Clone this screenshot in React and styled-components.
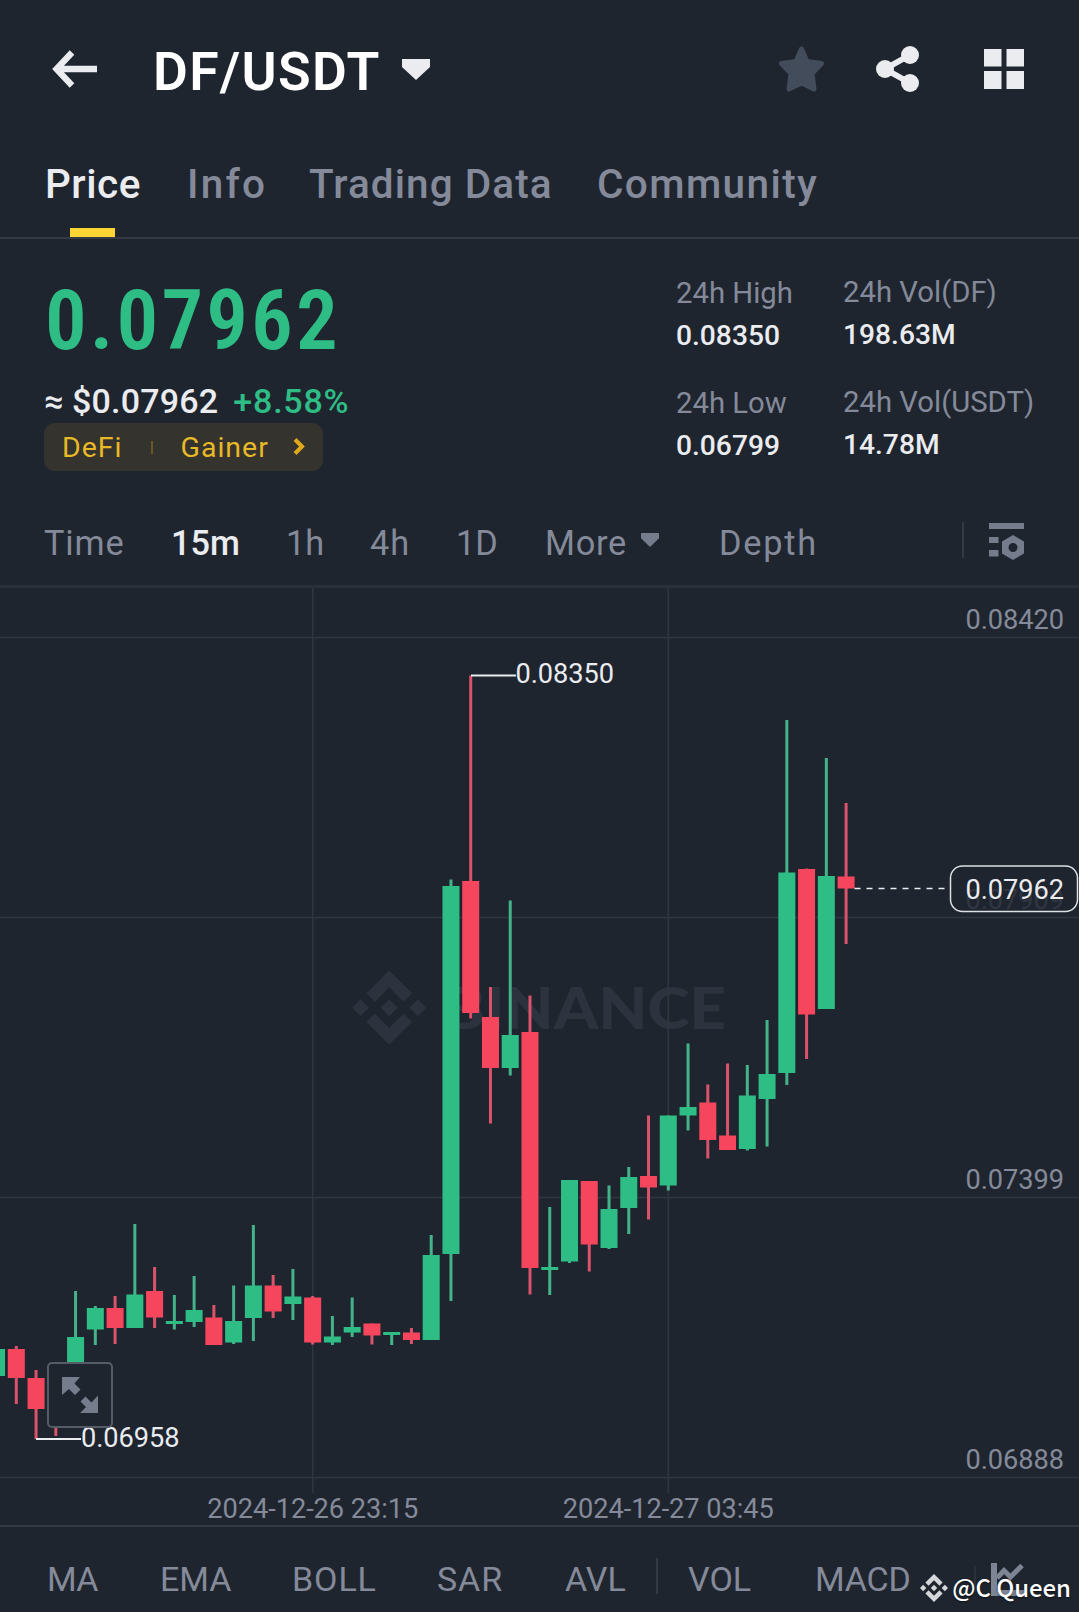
import styled, { createGlobalStyle } from 'styled-components'

const GlobalStyle = createGlobalStyle`
  :root {
    --bg: #1f252f;
    --line: #333a45;
    --grid: #303641;
    --text: #eaecef;
    --muted: #848a99;
    --icon: #757c8c;
    --green: #2ebd85;
    --red: #f6465d;
    --yellow: #fcd535;
  }
  * {
    box-sizing: border-box;
  }
  body {
    margin: 0;
    background: var(--bg);
    color: var(--text);
    font-family: Roboto, 'Noto Sans', sans-serif;
  }
`

const Screen = styled.div`
  position: relative;
  width: 1079px;
  height: 1612px;
  display: flex;
  flex-direction: column;
  overflow: hidden;
  background: var(--bg);
`

const Header = styled.header`
  height: 138px;
  padding: 0 55px 0 52px;
  display: flex;
  align-items: center;
  & > svg {
    display: block;
    flex: none;
  }
`

const Title = styled.h1`
  margin: 0 21px 0 56px;
  padding-top: 5px;
  width: 228px;
  font-size: 53.5px;
  line-height: 64px;
  font-weight: 600;
  letter-spacing: 1.3px;
  color: #fff;
`

const Actions = styled.div`
  margin-left: auto;
  display: flex;
  align-items: center;
  & > svg:nth-child(2) {
    margin: 0 65px 0 52px;
  }
`

const Tabs = styled.nav`
  height: 101px;
  padding: 22px 0 0 45px;
  display: flex;
  gap: 47px;
  border-bottom: 2px solid var(--line);
`

const Tab = styled.div`
  width: ${props => props.$width}px;
  height: 77px;
  display: flex;
  flex-direction: column;
  justify-content: space-between;
  font-size: 40.5px;
  line-height: 49px;
  font-weight: 500;
  letter-spacing: ${props => props.$spacing}px;
  white-space: nowrap;
  color: ${props => props.$active ? 'var(--text)' : 'var(--muted)'};
  &::after {
    content: '';
    width: 45px;
    height: 9px;
    margin-left: 25px;
    background: ${props => props.$active ? 'var(--yellow)' : 'transparent'};
  }
`

const Summary = styled.section`
  height: 262px;
  padding-left: 44px;
  display: flex;
`

const Quote = styled.div`
  width: 632px;
  padding-top: 42px;
`

const LastPrice = styled.div`
  padding-left: 1px;
  font-family: 'Roboto Condensed', Roboto, sans-serif;
  font-size: 83px;
  line-height: 80px;
  font-weight: 600;
  letter-spacing: 3.1px;
  color: var(--green);
`

const Converted = styled.div`
  margin-top: 19px;
  display: flex;
  font-size: 34px;
  line-height: 43px;
  font-weight: 500;
  white-space: pre;
  letter-spacing: .2px;
  & > span:first-child {
    width: 28px;
  }
  & > span:last-child {
    margin-left: 15px;
    letter-spacing: .8px;
    color: var(--green);
  }
`

const Badge = styled.div`
  width: 279px;
  height: 48px;
  padding: 0 18px 0 18px;
  display: flex;
  align-items: center;
  border-radius: 11px;
  background: #35332d;
  color: #e7b927;
  font-size: 28.5px;
  letter-spacing: 1px;
  & > i {
    width: 2px;
    height: 13px;
    margin: 0 28px 0 28px;
    background: #6a5626;
  }
  & > svg {
    margin: 0 0 1px auto;
  }
`

const Stats = styled.dl`
  margin: 0;
  padding-top: ${props => props.$top}px;
  width: ${props => props.$width}px;
  white-space: nowrap;
  line-height: 36px;
`

const StatLabel = styled.dt`
  font-size: 29.3px;
  color: var(--muted);
`

const StatValue = styled.dd`
  margin: 7px 0 31px;
  font-size: 28.2px;
  font-weight: 480;
`

const Intervals = styled.nav`
  height: 87px;
  padding: 0 55px 0 44px;
  display: grid;
  grid-template-columns: 127px 115px 84px 86px 89px 174px 1fr auto auto;
  align-items: center;
  border-bottom: 3px solid #2a303b;
  font-size: 34.3px;
  letter-spacing: .6px;
  color: var(--muted);
`

const Interval = styled.div`
  display: flex;
  align-items: center;
  gap: 14px;
  white-space: nowrap;
  font-weight: ${props => props.$active ? 500 : 400};
  letter-spacing: ${props => props.$spacing || 0}px;
  color: ${props => props.$active ? 'var(--text)' : 'inherit'};
  & > svg {
    margin-top: -6px;
  }
`

const Divider = styled.i`
  width: 2px;
  height: ${props => props.$height || 36}px;
  margin-top: ${props => props.$shift || 0}px;
  background: ${props => props.$faint ? '#2a303a' : 'var(--line)'};
`

const Settings = styled.svg`
  margin: -3px 0 0 25px;
`

const ChartArea = styled.section`
  position: relative;
  height: 939px;
  border-bottom: 2px solid var(--line);
`

const Plot = styled.svg`
  display: block;
  font-family: Roboto, sans-serif;
  font-size: 27.2px;
`

const ExpandButton = styled.button`
  position: absolute;
  left: 47px;
  top: 774px;
  width: 66px;
  height: 66px;
  padding: 0;
  display: grid;
  place-items: center;
  border: 2px solid #555c68;
  border-radius: 5px;
  background: var(--bg);
`

const Indicators = styled.nav`
  height: 85px;
  padding: 19px 56px 0 47px;
  display: grid;
  grid-template-columns: 113px 132px 145px 128px 91px 32px 127px 159px 1fr 32px;
  align-items: center;
  font-size: 34px;
  line-height: 40px;
  color: var(--muted);
`

const Indicator = styled.div`
  letter-spacing: ${props => props.$spacing || 0}px;
`

const Author = styled.div`
  position: absolute;
  right: 8px;
  bottom: 5px;
  display: flex;
  align-items: center;
  gap: 4px;
  font-family: 'Noto Sans CJK SC', 'Noto Sans', sans-serif;
  font-size: 23.9px;
  line-height: 40px;
  font-weight: 500;
  white-space: nowrap;
  color: #fff;
  text-shadow: 0 1px 2px rgba(0, 0, 0, .6);
  & > svg {
    margin-top: 2px;
  }
`

const LOGO = 'M38.73 53.2l24.59-24.58 24.6 24.6 14.3-14.31L63.32 0 24.43 38.9z M0 63.31l14.3-14.31 14.31 14.31-14.31 14.3z M38.73 73.41l24.59 24.59 24.6-24.6 14.31 14.29-38.9 38.91-38.91-38.88z M98 63.31l14.3-14.31 14.31 14.3-14.31 14.32z M77.83 63.3L63.32 48.78 48.8 63.3l14.52 14.51z'

const tabs = [
  { label: 'Price', width: 95, spacing: .5, active: true },
  { label: 'Info', width: 75, spacing: 2.2 },
  { label: 'Trading Data', width: 241, spacing: 1.05 },
  { label: 'Community', width: 218, spacing: 1.4 }
]

const statColumns = [
  { top: 36, width: 167, rows: [['24h High', '0.08350'], ['24h Low', '0.06799']] },
  { top: 34.5, width: 234, rows: [['24h Vol(DF)', '198.63M'], ['24h Vol(USDT)', '14.78M']] }
]

// [up, high, body top, body bottom, low], one entry for each 15 minutes
const candles = [
  [1, 1349, 1349, 1376, 1376],
  [0, 1346, 1349, 1378, 1404],
  [0, 1370, 1378, 1409, 1439],
  [0, 1400, 1409, 1420, 1436],
  [1, 1291, 1337, 1409, 1420],
  [1, 1306, 1308, 1329.5, 1345],
  [0, 1296, 1308, 1328, 1344],
  [1, 1224, 1294.5, 1328, 1328],
  [0, 1267, 1291, 1317.5, 1328],
  [1, 1295, 1321, 1324, 1329.5],
  [1, 1276, 1310, 1322, 1327],
  [0, 1305, 1317.5, 1345, 1345],
  [1, 1285.5, 1321, 1342.5, 1344],
  [1, 1225, 1285.5, 1318, 1341],
  [0, 1275, 1285.5, 1311.5, 1318],
  [1, 1269, 1296.5, 1304, 1320],
  [0, 1296, 1297.5, 1342.5, 1344.5],
  [1, 1316, 1336.5, 1342.5, 1345],
  [1, 1297.5, 1327, 1332.5, 1337],
  [0, 1323.5, 1323.5, 1335.5, 1344.5],
  [1, 1332, 1332, 1335, 1345],
  [0, 1328, 1332.5, 1340, 1344],
  [1, 1235, 1255, 1340, 1340],
  [1, 879.5, 886, 1254, 1301],
  [0, 675.5, 881, 1013, 1018.5],
  [0, 987, 1017, 1068, 1123.5],
  [1, 900.5, 1035, 1068, 1075.5],
  [0, 995.5, 1032, 1268, 1294.5],
  [1, 1207, 1267, 1270, 1295],
  [1, 1180, 1180, 1261.5, 1263],
  [0, 1181, 1181, 1244.5, 1271.5],
  [1, 1185.5, 1209, 1248, 1249],
  [1, 1167, 1177, 1208, 1234],
  [0, 1115.5, 1176, 1187.5, 1219.5],
  [1, 1115.5, 1115.5, 1185.5, 1190.5],
  [1, 1043.5, 1107, 1115.5, 1130.5],
  [0, 1084.5, 1102.5, 1140, 1158.5],
  [0, 1063.5, 1135.5, 1150, 1150],
  [1, 1065, 1095.5, 1149, 1150.5],
  [1, 1020, 1074, 1099, 1146.5],
  [1, 720, 872.5, 1073, 1085],
  [0, 868.5, 869, 1014.5, 1059],
  [1, 758, 876, 1009, 1009],
  [0, 803, 876.5, 888.5, 944]
]

const priceLines = [
  { y: 637.5, label: '0.08420' },
  { y: 917.5, label: '0.07909', covered: true },
  { y: 1197.5, label: '0.07399' },
  { y: 1477.5, label: '0.06888' }
]

const timeLines = [
  { x: 312.5, label: '2024-12-26 23:15' },
  { x: 668, label: '2024-12-27 03:45' }
]

const Caret = ({ width, height, color }) => (
  <svg width={width} height={height} viewBox="0 0 28 21" preserveAspectRatio="none" fill={color}>
    <path d="M0 0H28V8L14 21L0 8Z" />
  </svg>
)

const Candle = ({ index, data }) => {
  const [up, high, top, bottom, low] = data
  const x = 16.3 + (index - 1) * 19.757
  return (
    <g>
      <rect x={x - 1.5} y={high} width="3" height={low - high} fill={up ? '#44b389' : '#d9536a'} />
      <rect x={x - 8.5} y={top} width="17" height={bottom - top} fill={up ? 'var(--green)' : 'var(--red)'} />
    </g>
  )
}

const Chart = () => (
  <ChartArea>
    <Plot width="1079" height="937" viewBox="0 588 1079 937">
      <g fill="#2d333e">
        <path d={LOGO} transform="translate(352 970.5) scale(.587)" />
        <text x="443" y="1028.5" fontFamily="Lato" fontWeight="900" fontSize="56.5" textLength="283" lengthAdjust="spacingAndGlyphs">BINANCE</text>
      </g>
      {priceLines.map(line => (
        <g key={line.label}>
          <rect x="0" y={line.y - .75} width="1079" height="1.5" fill="var(--grid)" />
          <text x="965.5" y={line.y - 8.5} fill={line.covered ? '#303641' : 'var(--muted)'} textLength="98.5">{line.label}</text>
        </g>
      ))}
      {timeLines.map(line => (
        <g key={line.label}>
          <rect x={line.x - .5} y="588" width="1.5" height="905" fill="var(--grid)" />
          <text x={line.x + .3} y="1518" textAnchor="middle" textLength="211" fill="var(--muted)">{line.label}</text>
        </g>
      ))}
      {candles.map((data, i) => <Candle key={i} index={i} data={data} />)}
      <g fill="var(--text)">
        <rect x="471" y="674.5" width="45" height="2" />
        <text x="515.5" y="682.5" textLength="98.5">0.08350</text>
        <rect x="36" y="1438" width="45" height="2" />
        <text x="81" y="1446.5" textLength="98.5">0.06958</text>
      </g>
      <path d="M854.5 888.5H945" stroke="var(--text)" strokeWidth="1.3" strokeDasharray="6 6" />
      <rect x="950.5" y="866" width="127" height="45.500" rx="12" fill="none" stroke="#dcdfe4" strokeWidth="1.5" />
      <text x="965.5" y="899" textLength="98.5" fill="var(--text)">0.07962</text>
    </Plot>
    <ExpandButton>
      <svg width="38" height="38" viewBox="0 0 38 38" fill="var(--icon)">
        <path d="M1 1H19L13.500 7.500L19.500 13.500L14 19L8 13L1 19Z" />
        <path d="M37 37H19L25 31L19.500 25.500L24.500 20.500L30.500 26.500L37 19.500Z" />
      </svg>
    </ExpandButton>
  </ChartArea>
)

const App = () => (
  <Screen>
    <GlobalStyle />
    <Header>
      <svg width="45" height="38" viewBox="0 0 45 38" fill="none" stroke="var(--text)" strokeWidth="6.300">
        <path d="M45 19H5M20 2.500L4.500 19L20 35.500" />
      </svg>
      <Title>DF/USDT</Title>
      <Caret width={28} height={21} color="var(--text)" />
      <Actions>
        <svg width="45" height="46" viewBox="0 0 45 46" fill="#434c5a" stroke="#434c5a" strokeWidth="5" strokeLinejoin="round">
          <path d="M22.500 3L28 15.500L42.500 17.500L33 27.500L35 43L22.500 37L10 43L12 27.500L2.500 17.500L17 15.500Z" />
        </svg>
        <svg width="43" height="46" viewBox="0 0 43 46" fill="var(--text)">
          <path d="M34 9L9 23L34 37" fill="none" stroke="var(--text)" strokeWidth="6" />
          <circle cx="34" cy="9" r="9" />
          <circle cx="9" cy="23" r="9" />
          <circle cx="34" cy="37" r="9" />
        </svg>
        <svg width="40" height="40" viewBox="0 0 40 40" fill="var(--text)">
          <path d="M0 0H17.500V17.500H0ZM22.500 0H40V17.500H22.500ZM0 22H17.500V40H0ZM22.500 22H40V40H22.500Z" />
        </svg>
      </Actions>
    </Header>
    <Tabs>
      {tabs.map(tab => (
        <Tab key={tab.label} $width={tab.width} $spacing={tab.spacing} $active={tab.active}>{tab.label}</Tab>
      ))}
    </Tabs>
    <Summary>
      <Quote>
        <LastPrice>0.07962</LastPrice>
        <Converted>
          <span>≈</span>
          <span>$0.07962</span>
          <span>+8.58%</span>
        </Converted>
        <Badge>
          <span>DeFi</span>
          <i />
          <span>Gainer</span>
          <svg width="12" height="17" viewBox="0 0 12 17" fill="none" stroke="#e0a91c" strokeWidth="4">
            <path d="M2 1.500L9 8.500L2 15.500" />
          </svg>
        </Badge>
      </Quote>
      {statColumns.map(column => (
        <Stats key={column.top} $top={column.top} $width={column.width}>
          {column.rows.map(([label, value]) => (
            <div key={label}>
              <StatLabel>{label}</StatLabel>
              <StatValue>{value}</StatValue>
            </div>
          ))}
        </Stats>
      ))}
    </Summary>
    <Intervals>
      <Interval $spacing={.9}>Time</Interval>
      <Interval $active>15m</Interval>
      <Interval>1h</Interval>
      <Interval $spacing={1}>4h</Interval>
      <Interval>1D</Interval>
      <Interval $spacing={.7}>
        More
        <Caret width={18} height={14} color="var(--icon)" />
      </Interval>
      <Interval $spacing={1.8}>Depth</Interval>
      <Divider $shift={-6} />
      <Settings width="35" height="37" viewBox="0 0 35 37" fill="var(--icon)">
        <path d="M0 0H35V6H0ZM0 14H9.500V20H0ZM0 27H9.500V33.500H0Z" />
        <path fillRule="evenodd" d="M24 12L35 18.500V30.500L24 37L13 30.500V18.500ZM24 20A4.500 4.500 0 1 0 24 29A4.500 4.500 0 1 0 24 20Z" />
      </Settings>
    </Intervals>
    <Chart />
    <Indicators>
      <Indicator $spacing={-.8}>MA</Indicator>
      <Indicator>EMA</Indicator>
      <Indicator $spacing={.9}>BOLL</Indicator>
      <Indicator $spacing={.9}>SAR</Indicator>
      <Indicator>AVL</Indicator>
      <Divider $shift={-6} />
      <Indicator>VOL</Indicator>
      <Indicator $spacing={-.2}>MACD</Indicator>
      <Divider $faint $height={26} />
      <svg width="33" height="33" viewBox="0 0 33 33" fill="none" stroke="#7d8494" strokeWidth="6">
        <path d="M3 0V30H33" />
        <path d="M6 15L13 7.500L19.500 14L31 2.500" strokeWidth="5" />
      </svg>
    </Indicators>
    <Author>
      <svg width="28" height="28" viewBox="0 0 126.610 126.600" fill="#d5d6d8">
        <path d={LOGO} />
      </svg>
      @C Queen
    </Author>
  </Screen>
)

export default App
